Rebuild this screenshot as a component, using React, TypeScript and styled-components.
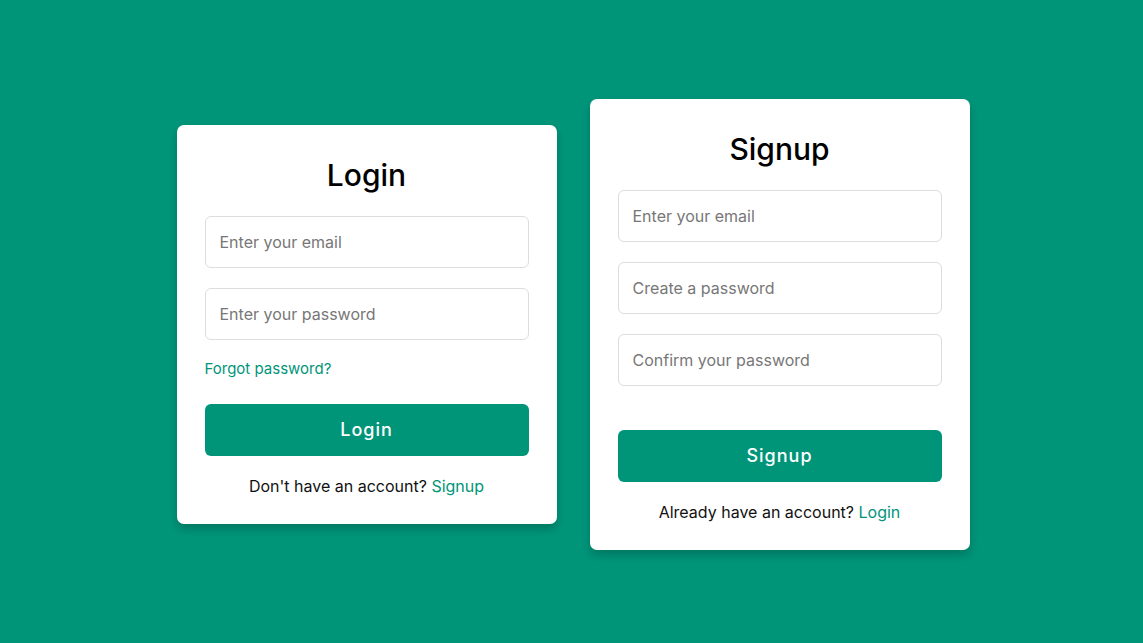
import React from "react";
import styled, { createGlobalStyle } from "styled-components";

const Global = createGlobalStyle`
  * { box-sizing: border-box; margin: 0; padding: 0; }
  html, body { margin: 0; padding: 0; background: #009579; }
  body { font-family: Inter, "Noto Sans", sans-serif; }
`;

const Page = styled.div`
  min-height: 643px;
  display: flex;
  align-items: center;
  justify-content: center;
  gap: 33px;
  padding: 5px 0 0 3px;
  background: #009579;
`;

const Card = styled.form`
  width: 380px;
  background: #fff;
  border-radius: 7px;
  box-shadow: 0 5px 10px rgba(0, 0, 0, 0.2);
  padding: 28px 28px 26px;
  display: flex;
  flex-direction: column;
`;

const Title = styled.h1`
  font-size: 30px;
  line-height: 44px;
  font-weight: 500;
  color: #000;
  text-align: center;
  margin-bottom: 19px;
`;

const Input = styled.input`
  height: 52px;
  width: 100%;
  padding: 0 14px;
  border: 1px solid #ddd;
  border-radius: 6px;
  font-family: inherit;
  font-size: 16px;
  color: #333;
  outline: none;
  & + & { margin-top: 20px; }
  &::placeholder { color: #777; }
`;

const Forgot = styled.a`
  display: block;
  margin-top: 19px;
  font-size: 15px;
  line-height: 20px;
  color: #009579;
  text-decoration: none;
`;

const Button = styled.button<{ $gap: number }>`
  margin-top: ${(p) => p.$gap}px;
  height: 52px;
  width: 100%;
  border: none;
  border-radius: 6px;
  background: #009579;
  color: #fff;
  font-family: inherit;
  font-size: 18px;
  font-weight: 500;
  letter-spacing: 1px;
`;

const Footer = styled.p`
  margin-top: 18px;
  font-size: 16px;
  line-height: 24px;
  text-align: center;
  color: #111;
`;

const Link = styled.a`
  color: #009579;
  text-decoration: none;
`;

export default function App() {
  return (
    <>
      <Global />
      <Page>
        <Card>
          <Title>Login</Title>
          <Input type="text" placeholder="Enter your email" />
          <Input type="password" placeholder="Enter your password" />
          <Forgot href="#">Forgot password?</Forgot>
          <Button type="button" $gap={25}>Login</Button>
          <Footer>
            Don't have an account? <Link href="#">Signup</Link>
          </Footer>
        </Card>
        <Card>
          <Title>Signup</Title>
          <Input type="text" placeholder="Enter your email" />
          <Input type="password" placeholder="Create a password" />
          <Input type="password" placeholder="Confirm your password" />
          <Button type="button" $gap={44}>Signup</Button>
          <Footer>
            Already have an account? <Link href="#">Login</Link>
          </Footer>
        </Card>
      </Page>
    </>
  );
}
